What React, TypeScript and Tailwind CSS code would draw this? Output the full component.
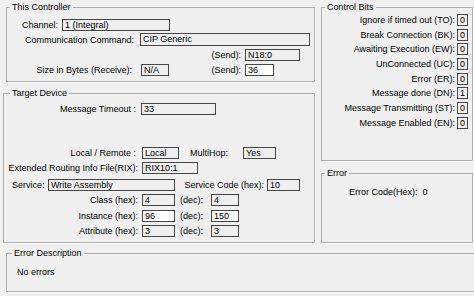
import type { ReactNode } from 'react';

interface BoxProps {
  className?: string;
  white?: boolean;
  children?: ReactNode;
}

// read-only edit box, Windows style
function Box({ className = '', white = false, children }: BoxProps) {
  return (
    <div
      className={`h-[12px] shrink-0 overflow-hidden whitespace-nowrap border border-[#474747] pl-[2px] leading-[10px] ${
        white ? 'bg-white' : 'bg-[#f0f0f0]'
      } ${className}`}
    >
      {children}
    </div>
  );
}

function Label({ className = '', children }: { className?: string; children: ReactNode }) {
  return <span className={`shrink-0 whitespace-nowrap leading-[12px] ${className}`}>{children}</span>;
}

function Group({ title, className = '', legend = 'ml-[3px]', children }: {
  title: string;
  className?: string;
  legend?: string;
  children?: ReactNode;
}) {
  return (
    <fieldset className={`border border-[#adadad] shadow-[1px_1px_0_#ffffff] ${className}`}>
      <legend className={`px-[2px] leading-[11px] ${legend}`}>{title}</legend>
      {children}
    </fieldset>
  );
}

const CONTROL_BITS = [
  { label: 'Ignore if timed out (TO):', value: '0' },
  { label: 'Break Connection (BK):', value: '0' },
  { label: 'Awaiting Execution (EW):', value: '0' },
  { label: 'UnConnected (UC):', value: '0' },
  { label: 'Error (ER):', value: '0' },
  { label: 'Message done (DN):', value: '1' },
  { label: 'Message Transmitting (ST):', value: '0' },
  { label: 'Message Enabled (EN):', value: '0' },
];

export default function App() {
  return (
    <div className="h-[296px] w-[474px] overflow-hidden bg-[#f0f0f0] pl-[6px] pt-[2px] font-['Liberation_Sans',Arial,sans-serif] text-[9px] text-black">
      <div className="flex gap-[6px]">
        {/* left column */}
        <div className="flex w-[309px] shrink-0 flex-col">
          <Group title="This Controller" className="h-[80px] w-[309px]">
            <div className="mt-[6px] flex items-center">
              <Label className="w-[51px] text-right">Channel:</Label>
              <Box className="ml-[4px] w-[108px]">1 (Integral)</Box>
            </div>
            <div className="mt-[2px] flex h-[13px] items-center">
              <Label className="w-[127px] text-right">Communication Command:</Label>
              <Box className="ml-[6px] h-[13px] w-[170px]">CIP Generic</Box>
            </div>
            <div className="mt-[3px] flex items-center">
              <Label className="w-[234px] text-right">(Send):</Label>
              <Box className="ml-[4px] w-[55px]">N18:0</Box>
            </div>
            <div className="mt-[3px] flex items-center">
              <Label className="w-[125px] text-right">Size in Bytes (Receive):</Label>
              <Box className="ml-[9px] w-[28px]">N/A</Box>
              <Label className="w-[72px] text-right">(Send):</Label>
              <Box className="ml-[4px] w-[29px]" white>36</Box>
            </div>
          </Group>

          <Group title="Target Device" className="-ml-[3px] mt-[6px] h-[155px] w-[312px]" legend="ml-[6px]">
            <div className="mt-[4px] flex items-center">
              <Label className="w-[132px] text-right">Message Timeout :</Label>
              <Box className="ml-[5px] w-[75px]">33</Box>
            </div>
            <div className="mt-[32px] flex items-center">
              <Label className="w-[132px] text-right">Local / Remote :</Label>
              <Box className="ml-[6px] w-[37px]">Local</Box>
              <Label className="ml-[11px] w-[53px]">MultiHop:</Label>
              <Box className="w-[33px]">Yes</Box>
            </div>
            <div className="mt-[3px] flex items-center">
              <Label className="w-[134px] text-right">Extended Routing Info File(RIX):</Label>
              <Box className="ml-[4px] w-[56px]">RIX10:1</Box>
            </div>
            <div className="mt-[5px] flex items-center">
              <Label className="ml-[8px] w-[36px]">Service:</Label>
              <Box className="w-[127px]">Write Assembly</Box>
              <Label className="w-[89px] text-right">Service Code (hex):</Label>
              <Box className="ml-[3px] w-[33px]">10</Box>
            </div>
            <div className="mt-[3px] flex items-center">
              <Label className="w-[134px] text-right">Class (hex):</Label>
              <Box className="ml-[4px] w-[33px]">4</Box>
              <Label className="ml-[5px] w-[31px]">(dec):</Label>
              <Box className="w-[28px]">4</Box>
            </div>
            <div className="mt-[4px] flex items-center">
              <Label className="w-[134px] text-right">Instance (hex):</Label>
              <Box className="ml-[4px] w-[33px]" white>96</Box>
              <Label className="ml-[5px] w-[31px]">(dec):</Label>
              <Box className="w-[28px]" white>150</Box>
            </div>
            <div className="mt-[3px] flex items-center">
              <Label className="w-[134px] text-right">Attribute (hex):</Label>
              <Box className="ml-[4px] w-[33px]">3</Box>
              <Label className="ml-[5px] w-[31px]">(dec):</Label>
              <Box className="w-[28px]">3</Box>
            </div>
          </Group>
        </div>

        {/* right column */}
        <div className="flex w-[152px] shrink-0 flex-col">
          <Group title="Control Bits" className="h-[159px] w-[152px]">
            <div className="mt-[1px] flex flex-col gap-[2.7px] pr-[4px]">
              {CONTROL_BITS.map((b) => (
                <div key={b.label} className="flex items-center justify-end gap-[2px]">
                  <Label>{b.label}</Label>
                  <Box className="w-[11px] pl-[1px]">{b.value}</Box>
                </div>
              ))}
            </div>
          </Group>

          <Group title="Error" className="mt-[7px] h-[75px] w-[152px]">
            <div className="mt-[7px] pl-[27px] leading-[12px]">Error Code(Hex):&nbsp; 0</div>
          </Group>
        </div>
      </div>

      <Group title="Error Description" className="mt-[5px] h-[44px] w-[470px]" legend="ml-[5px]">
        <div className="mt-[7px] pl-[10px] leading-[12px]">No errors</div>
      </Group>
    </div>
  );
}
